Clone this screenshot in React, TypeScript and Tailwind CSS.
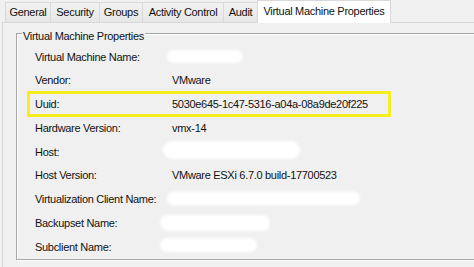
import React from "react";

type Tab = { label: string; w: string; active?: boolean };

const tabs: Tab[] = [
  { label: "General", w: "w-[46px]" },
  { label: "Security", w: "w-[50px]" },
  { label: "Groups", w: "w-[44px]" },
  { label: "Activity Control", w: "w-[82px]" },
  { label: "Audit", w: "w-[35px]" },
  { label: "Virtual Machine Properties", w: "w-[134px]", active: true },
];

type Row = {
  label: string;
  value?: string;
  blot?: string;
  dot?: boolean;
  highlight?: boolean;
};

// values blanked out in the screenshot are drawn as white smudges
const rows: Row[] = [
  { label: "Virtual Machine Name:", blot: "w-[76px] h-[13px] -ml-[5px] -mt-[1px]" },
  { label: "Vendor:", value: "VMware" },
  { label: "Uuid:", value: "5030e645-1c47-5316-a04a-08a9de20f225", highlight: true },
  { label: "Hardware Version:", value: "vmx-14" },
  { label: "Host:", blot: "w-[137px] h-[18px] -ml-[9px] -mt-[4px]" },
  { label: "Host Version:", value: "VMware ESXi 6.7.0 build-17700523" },
  { label: "Virtualization Client Name:", blot: "w-[193px] h-[13px] -ml-[5px] -mt-[2px]", dot: true },
  { label: "Backupset Name:", blot: "w-[110px] h-[16px] -ml-[12px]" },
  { label: "Subclient Name:", blot: "w-[97px] h-[14px] -ml-[12px] -mt-[4px]" },
];

function PropRow({ row }: { row: Row }) {
  const box = row.highlight
    ? "-ml-[8px] -my-[1.125px] h-[26px] w-[364px] border-[3px] border-[#f6ee1f] pl-[5px]"
    : "h-[23.75px]";
  return (
    <div className={`flex items-center ${box}`}>
      <div className="w-[137px] shrink-0 whitespace-nowrap">{row.label}</div>
      {row.value && <div className="whitespace-nowrap">{row.value}</div>}
      {row.blot && (
        <div className="flex items-center">
          <div className={`rounded-full bg-white blur-[1.5px] ${row.blot}`} />
          {row.dot && <div className="ml-[-6px] h-[2px] w-[2px] rounded-full bg-[#9a9a9a]" />}
        </div>
      )}
    </div>
  );
}

export default function App() {
  return (
    <div
      className="h-[267px] w-[474px] overflow-hidden bg-[#f0f0f0] text-[11px] tracking-[-0.3px] text-[#111]"
      style={{ fontFamily: '"Liberation Sans", Arial, sans-serif' }}
    >
      <div className="flex h-[22px] items-end pl-[5px]">
        {tabs.map((t) =>
          t.active ? (
            <div
              key={t.label}
              className={`${t.w} relative z-10 flex h-[23px] -mb-px items-center justify-center border border-b-0 border-[#d9d9d9] bg-white pb-[2px] whitespace-nowrap`}
            >
              {t.label}
            </div>
          ) : (
            <div
              key={t.label}
              className={`${t.w} -mr-px flex h-[20px] items-center justify-center border border-b-0 border-[#d9d9d9] bg-gradient-to-b from-[#f2f2f2] to-[#e6e6e6] whitespace-nowrap`}
            >
              {t.label}
            </div>
          )
        )}
      </div>

      <div className="ml-[2px] h-[260px] border-l border-t border-[#d9d9d9] pt-[10px] pl-[13px]">
        <div className="w-[470px] border border-[#a6a6a6] shadow-[inset_1px_1px_0_#fff,1px_1px_0_#fff]">
          <div className="-mt-[4px] ml-[5px] w-fit bg-[#f0f0f0] px-px leading-[12px]">
            Virtual Machine Properties
          </div>
          <div className="pt-[3px] pl-[18px]">
            {rows.map((r) => (
              <PropRow key={r.label} row={r} />
            ))}
          </div>
        </div>
      </div>
    </div>
  );
}
